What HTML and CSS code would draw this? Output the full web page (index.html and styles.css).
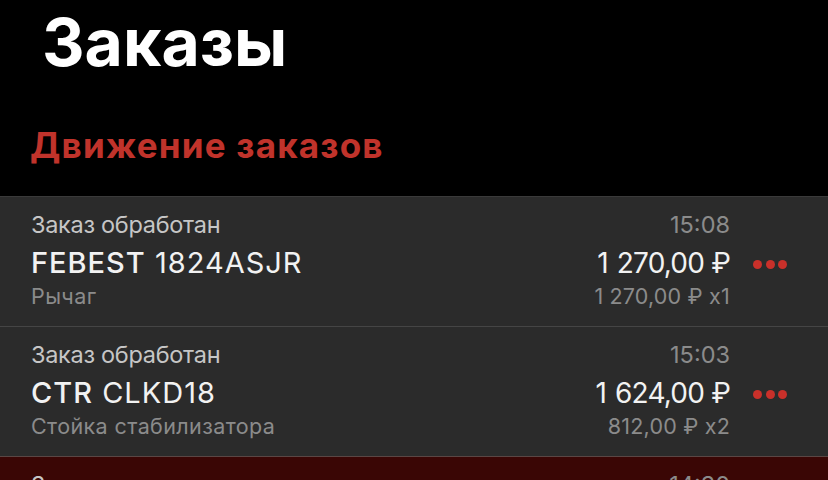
FILE: index.html
```html
<!DOCTYPE html>
<html lang="ru">
<head>
<meta charset="utf-8">
<link rel="stylesheet" href="styles.css">
</head>
<body>
<header class="top">
  <h1 class="title">Заказы</h1>
  <h2 class="section">Движение заказов</h2>
</header>
<main class="list">
  <div class="row">
    <div class="status">Заказ обработан</div>
    <div class="time">15:08</div>
    <div class="part"><span class="brand">FEBEST</span> 1824ASJR</div>
    <div class="sum">1<span class="gap"></span>270,00 ₽</div>
    <div class="dots"><i></i><i></i><i></i></div>
    <div class="name">Рычаг</div>
    <div class="qty">1<span class="gap"></span>270,00 ₽ x1</div>
  </div>
  <div class="row">
    <div class="status">Заказ обработан</div>
    <div class="time">15:03</div>
    <div class="part"><span class="brand">CTR</span> CLKD18</div>
    <div class="sum">1<span class="gap"></span>624,00 ₽</div>
    <div class="dots"><i></i><i></i><i></i></div>
    <div class="name">Стойка стабилизатора</div>
    <div class="qty">812,00 ₽ x2</div>
  </div>
  <div class="row row-cancel">
    <div class="status">Заказ снят</div>
    <div class="time">14:30</div>
  </div>
</main>
</body>
</html>
```
FILE: styles.css
```css
html, body {
  margin: 0;
  padding: 0;
  background: #000;
  width: 828px;
  height: 480px;
  overflow: hidden;
  font-family: Inter, "Noto Sans", sans-serif;
}
.top {
  display: flex;
  flex-direction: column;
}
.title {
  margin: 0;
  padding: 10px 0 0 42px;
  font-size: 66px;
  line-height: 65px;
  font-weight: 700;
  color: #fff;
}
.section {
  margin: 50px 0 0;
  padding-left: 30px;
  font-size: 35px;
  line-height: 40px;
  font-weight: 700;
  letter-spacing: 1.2px;
  color: #c0332b;
}
.list {
  margin-top: 31px;
  background: #2b2b2b;
  display: flex;
  flex-direction: column;
}
.row {
  display: grid;
  grid-template-columns: 1fr auto 34px;
  column-gap: 23px;
  padding: 13px 41px 17px 31px;
  border-top: 1px solid #454545;
}
.row:first-child {
  border-top-color: #3a3a3a;
}
.status, .time {
  font-size: 23.5px;
  line-height: 30px;
}
.status { color: #c6c6c6; grid-column: 1; letter-spacing: -0.3px; }
.time { color: #8b8b8b; grid-column: 2; text-align: right; }
.part, .sum {
  margin-top: 3px;
  line-height: 40px;
  color: #f2f2f2;
}
.part { grid-column: 1; font-size: 29px; letter-spacing: 1px; }
.brand { font-weight: 500; }
.sum { grid-column: 2; text-align: right; font-size: 28px; letter-spacing: -0.8px; }
.gap {
  display: inline-block;
  width: 9px;
}
.dots {
  grid-column: 3;
  display: flex;
  gap: 3.5px;
  align-items: center;
  margin-top: 5px;
}
.dots i {
  width: 9px;
  height: 9px;
  border-radius: 50%;
  background: #c9302a;
}
.name, .qty {
  font-size: 21.5px;
  line-height: 26px;
  color: #8b8b8b;
}
.name { grid-column: 1; letter-spacing: 0.4px; }
.qty { grid-column: 2; text-align: right; letter-spacing: 0.2px; }
.qty .gap { width: 6px; }
.row-cancel {
  background: #3a0605;
  border-top-color: #5a4644;
}
```
